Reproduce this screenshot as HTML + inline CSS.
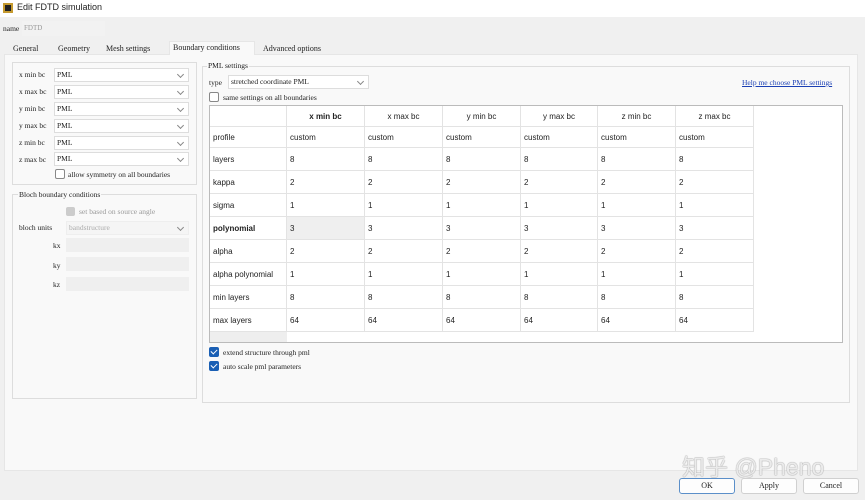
<!DOCTYPE html>
<html><head><meta charset="utf-8"><style>
*{box-sizing:border-box;margin:0;padding:0}
body{width:865px;height:500px;background:#f0f0f0;position:relative;overflow:hidden;font-family:"Liberation Serif","Noto Serif CJK SC",serif;font-size:8px;color:#222}
.a{position:absolute}
.s{font-family:"Liberation Sans",sans-serif}
.dd{position:absolute;background:#fff;border:1px solid #ddd;height:14px;padding-left:2px;line-height:12px;font-size:7.5px}
.dd:after{content:"";position:absolute;right:5px;top:3px;width:4px;height:4px;border-right:1px solid #888;border-bottom:1px solid #888;transform:rotate(45deg)}
.cb{position:absolute;width:10px;height:10px;border:1px solid #888;border-radius:2px;background:#fff}
.ck{position:absolute;width:10px;height:10px;border-radius:2px;background:#1a5fb4}
.ck:after{content:"";position:absolute;left:3px;top:1px;width:3px;height:5px;border-right:1.3px solid #fff;border-bottom:1.3px solid #fff;transform:rotate(45deg)}
.grp{position:absolute;border:1px solid #ddd}
.cell{position:absolute;border-right:1px solid #e3e3e3;border-bottom:1px solid #e3e3e3;font-family:"Liberation Sans",sans-serif;font-size:8px;padding-left:3px;display:flex;align-items:center;background:#fff}
.btn{position:absolute;height:16px;width:56px;background:#fdfdfd;border:1px solid #d0d0d0;border-radius:3px;text-align:center;line-height:14px;font-size:8px}
.fld{position:absolute;background:#efefef;height:14px;left:66px;width:123px}
</style></head><body>
<div class="a" style="left:0;top:0;width:865px;height:17px;background:#fff"></div>
<div class="a" style="left:3px;top:3px;width:10px;height:10px;background:#222;border:2px solid #c59a30"></div>
<div class="a s" style="left:17px;top:2px;font-size:9px">Edit FDTD simulation</div>
<div class="a" style="left:3px;top:24px;font-size:7.5px">name</div>
<div class="a" style="left:22px;top:21px;width:83px;height:15px;background:#f2f2f2;color:#999;font-size:7px;padding:3px 2px">FDTD</div>
<div class="a" style="left:4px;top:54px;width:854px;height:417px;background:#f9f9f9;border:1px solid #e6e6e6"></div>
<div class="a" style="left:169px;top:41px;width:86px;height:14px;background:#f9f9f9;border:1px solid #e6e6e6;border-bottom:none"></div>
<div class="a" style="left:13px;top:44px">General</div>
<div class="a" style="left:58px;top:44px">Geometry</div>
<div class="a" style="left:106px;top:44px">Mesh settings</div>
<div class="a" style="left:173px;top:43px">Boundary conditions</div>
<div class="a" style="left:263px;top:44px">Advanced options</div>

<div class="grp" style="left:12px;top:62px;width:185px;height:123px"></div>
<div class="a" style="left:19px;top:66px;line-height:17px;font-size:7.5px">x min bc<br>x max bc<br>y min bc<br>y max bc<br>z min bc<br>z max bc</div>
<div class="dd" style="left:54px;top:68px;width:135px">PML</div>
<div class="dd" style="left:54px;top:85px;width:135px">PML</div>
<div class="dd" style="left:54px;top:102px;width:135px">PML</div>
<div class="dd" style="left:54px;top:119px;width:135px">PML</div>
<div class="dd" style="left:54px;top:136px;width:135px">PML</div>
<div class="dd" style="left:54px;top:152px;width:135px">PML</div>
<div class="cb" style="left:55px;top:169px"></div>
<div class="a" style="left:68px;top:170px;font-size:7.5px">allow symmetry on all boundaries</div>

<div class="grp" style="left:12px;top:194px;width:185px;height:205px"></div>
<div class="a" style="left:18px;top:190px;background:#f9f9f9;padding:0 1px;font-size:7.5px">Bloch boundary conditions</div>
<div class="a" style="left:66px;top:207px;width:9px;height:9px;background:#ccc;border-radius:2px"></div>
<div class="a" style="left:79px;top:207px;color:#999;font-size:7.5px">set based on source angle</div>
<div class="a" style="left:19px;top:223px;font-size:7.5px">bloch units</div>
<div class="dd" style="left:66px;top:221px;width:123px;color:#aaa;background:#f5f5f5;border-color:#eee">bandstructure</div>
<div class="a" style="left:53px;top:241px;font-size:7.5px">kx</div><div class="fld" style="top:238px"></div>
<div class="a" style="left:53px;top:261px;font-size:7.5px">ky</div><div class="fld" style="top:257px"></div>
<div class="a" style="left:53px;top:280px;font-size:7.5px">kz</div><div class="fld" style="top:277px"></div>

<div class="grp" style="left:202px;top:66px;width:648px;height:337px"></div>
<div class="a" style="left:207px;top:61px;background:#f9f9f9;padding:0 1px;font-size:7.5px">PML settings</div>
<div class="a" style="left:209px;top:78px;font-size:7.5px">type</div>
<div class="dd" style="left:228px;top:75px;width:141px">stretched coordinate PML</div>
<div class="a" style="left:742px;top:78px;color:#1a3fb4;text-decoration:underline;font-size:7.5px">Help me choose PML settings</div>
<div class="cb" style="left:209px;top:92px"></div>
<div class="a" style="left:223px;top:93px;font-size:7.5px">same settings on all boundaries</div>

<div class="a" style="left:209px;top:105px;width:634px;height:238px;background:#fff;border:1px solid #bbb"></div>
<div id="t"></div>
<div class="a" style="left:210px;top:332px;width:77px;height:10px;background:#eee"></div>

<div class="ck" style="left:209px;top:347px"></div>
<div class="a" style="left:223px;top:348px;font-size:7.5px">extend structure through pml</div>
<div class="ck" style="left:209px;top:361px"></div>
<div class="a" style="left:223px;top:362px;font-size:7.5px">auto scale pml parameters</div>

<div class="a s" style="left:682px;top:448px;font-size:23px;color:rgba(255,255,255,.8);text-shadow:0 0 1px #999,0 0 1px #999">知乎 @Pheno</div>
<div class="btn" style="left:679px;top:478px;border-color:#5b8fc9">OK</div>
<div class="btn" style="left:741px;top:478px">Apply</div>
<div class="btn" style="left:803px;top:478px">Cancel</div>
<script>
var xs=[210,287,365,443,521,598,676,754],ys=[106,127,148,171,194,217,240,263,286,309,332];
var hd=["","x min bc","x max bc","y min bc","y max bc","z min bc","z max bc"];
var rows=[["profile","custom"],["layers","8"],["kappa","2"],["sigma","1"],["polynomial","3"],["alpha","2"],["alpha polynomial","1"],["min layers","8"],["max layers","64"]];
var h="";
for(var r=0;r<10;r++)for(var c=0;c<7;c++){
var st="left:"+xs[c]+"px;top:"+ys[r]+"px;width:"+(xs[c+1]-xs[c])+"px;height:"+(ys[r+1]-ys[r])+"px;";
var txt;
if(r==0){txt=hd[c];st+="justify-content:center;padding:0;"+(c==1?"font-weight:bold;":"");}
else{txt=c==0?rows[r-1][0]:rows[r-1][1];if(r==5&&c==0)st+="font-weight:bold;";if(r==5&&c==1)st+="background:#efefef;";}
h+='<div class="cell" style="'+st+'">'+txt+'</div>';}
document.getElementById("t").innerHTML=h;
</script>
</body></html>
